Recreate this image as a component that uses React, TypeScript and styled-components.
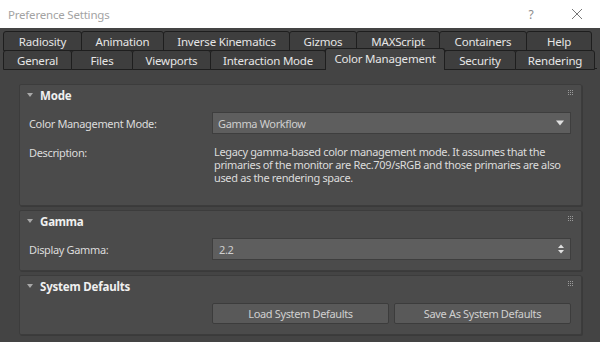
import React from 'react';
import styled, { createGlobalStyle } from 'styled-components';

const GlobalStyle = createGlobalStyle`
  html, body {
    margin: 0;
    padding: 0;
    width: 600px;
    height: 342px;
    overflow: hidden;
    background: #444444;
  }
  * {
    box-sizing: border-box;
  }
`;

const Window = styled.div`
  width: 600px;
  height: 342px;
  display: flex;
  flex-direction: column;
  background: #444444;
  font-family: 'Noto Sans', 'Open Sans', sans-serif;
  font-size: 11px;
  letter-spacing: -0.35px;
  color: #dcdcdc;
`;

const TitleBar = styled.div`
  height: 28px;
  flex: 0 0 28px;
  background: #ffffff;
  display: flex;
  align-items: center;
  padding-left: 8px;
`;

const Title = styled.div`
  flex: 1;
  color: #a3a3a3;
  font-size: 11.5px;
  letter-spacing: -0.2px;
`;

const TitleButton = styled.div`
  width: 46px;
  height: 28px;
  display: flex;
  align-items: center;
  justify-content: center;
  color: #8c8c8c;
  font-size: 12px;
`;

const TabArea = styled.div`
  padding: 3px 3px 0;
  display: flex;
  flex-direction: column;
`;

const TabRow = styled.div<{ $front?: boolean }>`
  display: flex;
  height: ${p => (p.$front ? 20 : 19)}px;
  position: relative;
  margin-top: ${p => (p.$front ? -1 : 0)}px;
  border-bottom: ${p => (p.$front ? '1px solid #1e1e1e' : 'none')};
`;

const Tab = styled.div<{ $w: number; $active?: boolean; $front?: boolean }>`
  width: ${p => p.$w}px;
  flex: 0 0 ${p => p.$w}px;
  height: ${p => (p.$active ? 22 : 20)}px;
  margin-top: ${p => (p.$active ? -1 : p.$front ? 1 : 0)}px;
  margin-right: -1px;
  background: ${p => (p.$active ? '#444444' : '#3e3e3e')};
  border: 1px solid #1e1e1e;
  border-bottom: ${p => (p.$active ? 'none' : '1px solid #1e1e1e')};
  border-radius: 3px 3px 0 0;
  color: #e6e6e6;
  font-size: 11.5px;
  letter-spacing: -0.2px;
  display: flex;
  align-items: ${p => (p.$active ? 'flex-start' : 'center')};
  padding-top: ${p => (p.$active ? 2 : 0)}px;
  justify-content: center;
  white-space: nowrap;
  position: relative;
  z-index: ${p => (p.$active ? 2 : 1)};
`;

const Content = styled.div`
  flex: 1;
  padding: 15px 18px 0 19px;
  display: flex;
  flex-direction: column;
  gap: 4px;
`;

const Panel = styled.div`
  background: #4b4b4b;
  border: 1px solid #3c3c3c;
  border-radius: 2px;
  box-shadow: 1px 1px 0 #3a3a3a;
  padding: 0 10px 10px 9px;
  position: relative;
`;

const PanelHeader = styled.div`
  height: 20px;
  display: flex;
  align-items: center;
  margin-bottom: 7px;
`;

const Caret = styled.svg`
  width: 6px;
  height: 4px;
  margin: 0 7px 1px -2px;
  fill: #a8a8a8;
`;

const PanelTitle = styled.div`
  font-weight: bold;
  font-size: 11.5px;
  letter-spacing: -0.2px;
  color: #f0f0f0;
`;

const Grip = styled.div`
  position: absolute;
  top: 5px;
  right: 8px;
  width: 5px;
  height: 5px;
  display: grid;
  grid-template-columns: repeat(3, 1px);
  grid-template-rows: repeat(3, 1px);
  gap: 1px;
  span {
    background: #9a9a9a;
  }
`;

const Row = styled.div<{ $mt?: number }>`
  display: grid;
  grid-template-columns: 183px 1fr;
  align-items: center;
  margin-top: ${p => p.$mt ?? 0}px;
`;

const TopRow = styled(Row)`
  align-items: start;
`;

const Label = styled.div`
  color: #dcdcdc;
  white-space: nowrap;
`;

const Field = styled.div`
  height: 22px;
  background: #5e5e5e;
  border: 1px solid #3e3e3e;
  display: flex;
  align-items: center;
  padding: 0 6px 0 5px;
  color: #cfcfcf;
`;

const FieldText = styled.div<{ $pad?: number }>`
  flex: 1;
  padding-left: ${p => p.$pad ?? 0}px;
`;

const Description = styled.div`
  line-height: 13px;
  color: #dcdcdc;
  padding-left: 2px;
  min-height: 50px;
`;

const Buttons = styled.div`
  display: flex;
  gap: 5px;
`;

const Button = styled.div`
  flex: 1;
  height: 21px;
  background: #595959;
  border: 1px solid #3c3c3c;
  border-radius: 2px;
  display: flex;
  align-items: center;
  justify-content: center;
  color: #d0d0d0;
`;

const backTabs: [string, number][] = [
  ['Radiosity', 79],
  ['Animation', 83],
  ['Inverse Kinematics', 127],
  ['Gizmos', 68],
  ['MAXScript', 84],
  ['Containers', 88],
  ['Help', 66],
];

const frontTabs: [string, number][] = [
  ['General', 69],
  ['Files', 62],
  ['Viewports', 79],
  ['Interaction Mode', 116],
  ['Color Management', 120],
  ['Security', 72],
  ['Rendering', 80],
];

const GripDots = () => (
  <Grip>
    {Array.from({ length: 9 }).map((_, i) => (
      <span key={i} />
    ))}
  </Grip>
);

const Rollout: React.FC<{ title: string; children: React.ReactNode }> = ({ title, children }) => (
  <Panel>
    <PanelHeader>
      <Caret viewBox="0 0 6 4">
        <path d="M0 0 H6 L3 4 Z" />
      </Caret>
      <PanelTitle>{title}</PanelTitle>
    </PanelHeader>
    <GripDots />
    {children}
  </Panel>
);

const App: React.FC = () => {
  return (
    <Window>
      <GlobalStyle />
      <TitleBar>
        <Title>Preference Settings</Title>
        <TitleButton>?</TitleButton>
        <TitleButton>
          <svg width="12" height="12" viewBox="0 0 12 12">
            <path d="M1 1 L11 11 M11 1 L1 11" stroke="#777" strokeWidth="1" fill="none" />
          </svg>
        </TitleButton>
      </TitleBar>

      <TabArea>
        <TabRow>
          {backTabs.map(([name, w]) => (
            <Tab key={name} $w={w}>
              {name}
            </Tab>
          ))}
        </TabRow>
        <TabRow $front>
          {frontTabs.map(([name, w]) => (
            <Tab key={name} $w={w} $front $active={name === 'Color Management'}>
              {name}
            </Tab>
          ))}
        </TabRow>
      </TabArea>

      <Content>
        <Rollout title="Mode">
          <Row>
            <Label>Color Management Mode:</Label>
            <Field>
              <FieldText>Gamma Workflow</FieldText>
              <svg width="8" height="6" viewBox="0 0 8 6">
                <path d="M0 0.5 H8 L4 5.5 Z" fill="#e0e0e0" />
              </svg>
            </Field>
          </Row>
          <TopRow $mt={11}>
            <Label>Description:</Label>
            <Description>
              Legacy gamma-based color management mode. It assumes that the primaries of the
              monitor are Rec.709/sRGB and those primaries are also used as the rendering space.
            </Description>
          </TopRow>
        </Rollout>

        <Rollout title="Gamma">
          <Row>
            <Label>Display Gamma:</Label>
            <Field>
              <FieldText $pad={1}>2.2</FieldText>
              <svg width="6" height="10" viewBox="0 0 6 10">
                <path d="M0 4 H6 L3 0.5 Z M0 6 H6 L3 9.5 Z" fill="#e0e0e0" />
              </svg>
            </Field>
          </Row>
        </Rollout>

        <Rollout title="System Defaults">
          <Row>
            <div />
            <Buttons>
              <Button>Load System Defaults</Button>
              <Button>Save As System Defaults</Button>
            </Buttons>
          </Row>
        </Rollout>
      </Content>
    </Window>
  );
};

export default App;
